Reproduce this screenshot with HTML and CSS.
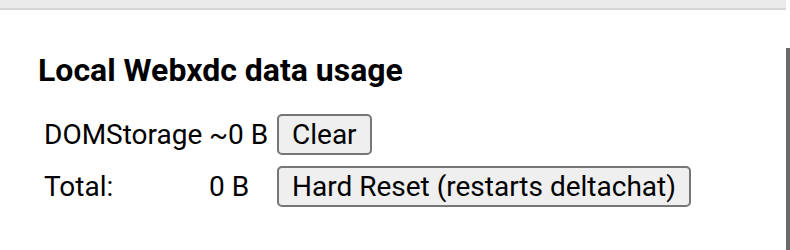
FILE: index.html
```html
<!DOCTYPE html>
<html>
<head>
<meta charset="utf-8">
<link rel="stylesheet" href="styles.css">
</head>
<body>
<div class="topbar"></div>
<div class="edge"></div>
<main class="content">
  <h2 class="title">Local Webxdc data usage</h2>
  <div class="usage">
    <span class="label">DOMStorage</span>
    <span class="size">~0 B</span>
    <span class="action"><button class="btn">Clear</button></span>
    <span class="label">Total:</span>
    <span class="size">0 B</span>
    <span class="action"><button class="btn">Hard Reset (restarts deltachat)</button></span>
  </div>
</main>
</body>
</html>
```
FILE: styles.css
```css
html, body {
  margin: 0;
  padding: 0;
  background: #ffffff;
}
body {
  font-family: Roboto, "Liberation Sans", sans-serif;
  color: #000000;
  width: 790px;
  height: 250px;
  overflow: hidden;
  position: relative;
}
.topbar {
  width: 786px;
  height: 8px;
  background: #ebebeb;
  border-bottom: 2px solid #d6d6d6;
}
.edge {
  position: absolute;
  right: 0;
  top: 48px;
  width: 4px;
  bottom: 0;
  background: #6b6b6b;
}
.content {
  padding: 0 0 0 38px;
}
.title {
  margin: 42px 0 0 0;
  font-size: 32px;
  line-height: 36px;
  font-weight: 700;
}
.usage {
  margin-top: 26px;
  padding-left: 6px;
  display: grid;
  grid-template-columns: 165px 68px auto;
  grid-auto-rows: 41px;
  row-gap: 11px;
  align-items: center;
  justify-items: start;
  font-size: 28px;
}
.btn {
  font-family: inherit;
  font-size: 28px;
  color: #000;
  background: #efefef;
  border: 2px solid #767676;
  border-radius: 5px;
  height: 41px;
  padding: 0 13px;
  margin: 0;
  display: block;
}
```
